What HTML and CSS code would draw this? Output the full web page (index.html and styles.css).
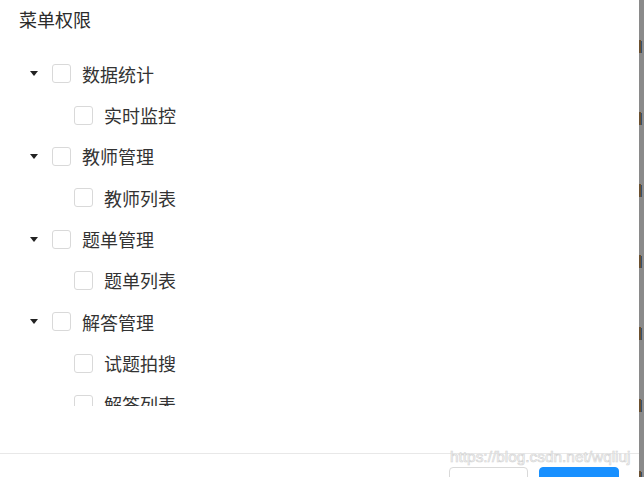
FILE: index.html
```html
<!DOCTYPE html>
<html lang="zh-CN">
<head>
<meta charset="utf-8">
<title>菜单权限</title>
<link rel="stylesheet" href="styles.css">
</head>
<body>
<div class="page">
  <div class="modal">
    <div class="modal-header">菜单权限</div>
    <div class="modal-body">
      <ul class="tree">
        <li class="node"><span class="switcher open"></span><span class="checkbox"></span><span class="label">数据统计</span></li>
        <li class="node child"><span class="switcher"></span><span class="checkbox"></span><span class="label">实时监控</span></li>
        <li class="node"><span class="switcher open"></span><span class="checkbox"></span><span class="label">教师管理</span></li>
        <li class="node child"><span class="switcher"></span><span class="checkbox"></span><span class="label">教师列表</span></li>
        <li class="node"><span class="switcher open"></span><span class="checkbox"></span><span class="label">题单管理</span></li>
        <li class="node child"><span class="switcher"></span><span class="checkbox"></span><span class="label">题单列表</span></li>
        <li class="node"><span class="switcher open"></span><span class="checkbox"></span><span class="label">解答管理</span></li>
        <li class="node child"><span class="switcher"></span><span class="checkbox"></span><span class="label">试题拍搜</span></li>
        <li class="node child"><span class="switcher"></span><span class="checkbox"></span><span class="label">解答列表</span></li>
      </ul>
    </div>
    <div class="modal-footer">
      <button class="btn">取 消</button>
      <button class="btn btn-primary">确 定</button>
    </div>
    <div class="watermark">https://blog.csdn.net/wqliuj</div>
  </div>
  <div class="mask-strip"></div>
</div>
</body>
</html>
```

FILE: styles.css
```css
html, body {
  margin: 0;
  padding: 0;
  background: #fff;
}

body {
  font-family: "Noto Sans CJK SC", "Noto Sans", sans-serif;
  color: #333;
  overflow: hidden;
}

.page {
  display: flex;
  align-items: flex-start;
  width: 644px;
  height: 477px;
  overflow: hidden;
}

.modal {
  position: relative;
  flex: none;
  width: 639px;
  display: flex;
  flex-direction: column;
  background: #fff;
}

.modal-header {
  height: 38px;
  padding-left: 19px;
  font-size: 18px;
  line-height: 38px;
  color: #2b2b2b;
}

.modal-body {
  margin-top: 15px;
  height: 353px;
  overflow: hidden;
}

.tree {
  list-style: none;
  margin: 0;
  padding: 0;
}

.node {
  display: flex;
  align-items: center;
  height: 41.35px;
  padding-left: 24px;
  font-size: 18px;
  color: #333;
}

.node.child {
  padding-left: 46px;
}

.switcher {
  width: 19px;
  height: 19px;
  display: flex;
  align-items: center;
  justify-content: center;
}

.switcher.open::before {
  content: "";
  width: 0;
  height: 0;
  border-left: 4px solid transparent;
  border-right: 4px solid transparent;
  border-top: 5px solid #222;
}

.checkbox {
  box-sizing: border-box;
  width: 19px;
  height: 19px;
  margin-left: 9px;
  border: 1px solid #d9d9d9;
  border-radius: 3px;
  background: #fff;
}

.label {
  margin-left: 11px;
  line-height: 24px;
}

.modal-footer {
  margin-top: 47px;
  border-top: 1px solid #e8e8e8;
  padding: 13px 20px 12px 0;
  display: flex;
  justify-content: flex-end;
  gap: 11px;
}

.btn {
  box-sizing: border-box;
  flex: none;
  width: 79px;
  height: 42px;
  border: 1px solid #d9d9d9;
  border-radius: 4px;
  background: #fff;
  font-family: "Noto Sans CJK SC", sans-serif;
  font-size: 16px;
  line-height: 22px;
  color: #333;
}

.btn-primary {
  width: 80px;
  background: #1890ff;
  border-color: #1890ff;
  color: #fff;
}

.watermark {
  position: absolute;
  left: 450px;
  top: 447px;
  font-family: "Liberation Sans", Arial, sans-serif;
  font-size: 15.4px;
  line-height: 20px;
  color: rgba(255, 255, 255, 0.7);
  -webkit-text-stroke: 0.7px #d4d4d4;
  white-space: nowrap;
  pointer-events: none;
}

.mask-strip {
  position: relative;
  flex: none;
  width: 5px;
  height: 477px;
  background: #8a8a8a;
}

.mask-strip::before {
  content: "";
  position: absolute;
  left: 0;
  top: 0;
  width: 2px;
  height: 100%;
  background: repeating-linear-gradient(to bottom,
    transparent 0, transparent 40px,
    #6b5030 40px, #6b5030 53px,
    transparent 53px, transparent 71.8px);
}

.mask-strip::after {
  content: "";
  position: absolute;
  left: 2px;
  top: 0;
  width: 1px;
  height: 100%;
  background: repeating-linear-gradient(to bottom,
    transparent 0, transparent 41px,
    #35506e 41px, #35506e 53px,
    transparent 53px, transparent 71.8px);
}
```
